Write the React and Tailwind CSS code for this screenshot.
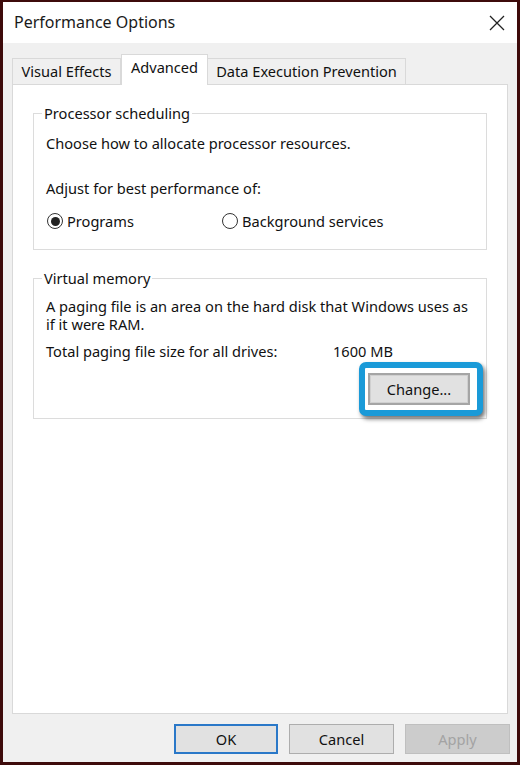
import React from "react";

const font = { fontFamily: '"Noto Sans", "Open Sans", sans-serif' };

function Radio({ checked, label }) {
  return (
    <label className="flex items-center gap-[4px]">
      <span className="w-[16px] h-[16px] rounded-full border border-[#333333] bg-white flex items-center justify-center">
        {checked && <span className="w-[9px] h-[9px] rounded-full bg-[#222222]" />}
      </span>
      <span>{label}</span>
    </label>
  );
}

function GroupBox({ title, className, children }) {
  return (
    <div className={"relative border border-[#dcdcdc] " + className}>
      <span className="absolute left-[8px] top-[-12px] bg-white px-[2px] leading-[22px]">{title}</span>
      {children}
    </div>
  );
}

export default function App() {
  return (
    <div
      className="w-[520px] h-[765px] border-[#3e0b0b] border-l-[3px] border-r-[3px] border-t-[2px] border-b-[3px] text-[14.6px] text-[#111111]"
      style={font}
    >
      <div className="flex flex-col h-full bg-[#f0f0f0]">
        <div className="h-[41px] bg-white flex items-center justify-between pl-[11px] pr-[12px]">
          <span className="text-[16px] text-[#1a1a1a] leading-none pb-[2px]">Performance Options</span>
          <svg width="16" height="16" viewBox="0 0 16 16">
            <path d="M1 1 L15 15 M15 1 L1 15" stroke="#222" strokeWidth="1.3" />
          </svg>
        </div>
        <div className="flex-1 flex flex-col px-[9px] pt-[10px]">
          <div className="flex items-end h-[31px] relative z-10">
            <div className="h-[26px] w-[109px] border border-[#d9d9d9] border-b-0 bg-[#f0f0f0] flex items-center justify-center">Visual Effects</div>
            <div className="h-[31px] w-[87px] border border-[#d9d9d9] border-b-0 bg-white flex items-center justify-center pb-[4px] mb-[-1px]">Advanced</div>
            <div className="h-[26px] w-[198px] border border-[#d9d9d9] border-b-0 border-l-0 bg-[#f0f0f0] flex items-center justify-center">Data Execution Prevention</div>
          </div>
          <div className="h-[630px] w-[496px] bg-white border border-[#d9d9d9] px-[20px] pt-[28px]">
            <GroupBox title="Processor scheduling" className="h-[137px] pl-[12px] pt-[18px]">
              <div className="leading-[22px]">Choose how to allocate processor resources.</div>
              <div className="leading-[22px] mt-[23px]">Adjust for best performance of:</div>
              <div className="flex mt-[11px] leading-[22px] pl-[1px]">
                <div className="w-[175px]"><Radio checked label="Programs" /></div>
                <Radio label="Background services" />
              </div>
            </GroupBox>
            <GroupBox title="Virtual memory" className="h-[141px] mt-[28px] pl-[12px] pt-[18px]">
              <div className="leading-[18px] pr-[10px]">A paging file is an area on the hard disk that Windows uses as if it were RAM.</div>
              <div className="flex leading-[22px] mt-[7px]">
                <span className="w-[287px]">Total paging file size for all drives:</span>
                <span>1600 MB</span>
              </div>
              <div className="flex justify-end pr-[3px] mt-[0px]">
                <div className="rounded-[7px] border-[6px] border-[#1a9ad8] px-[3px] py-[5px] pr-[7px] shadow-[2px_3px_4px_rgba(0,0,0,0.55)] bg-white">
                  <button className="w-[102px] h-[32px] bg-[#e1e1e1] border-2 border-[#a5a5a5] shadow-[inset_0_0_0_1px_#d0d0d0] leading-none">Change...</button>
                </div>
              </div>
            </GroupBox>
          </div>
          <div className="flex justify-end gap-[11px] mt-[10px] pr-[2px] mr-[-4px]">
            <button className="w-[104px] h-[30px] bg-[#e1e1e1] border-2 border-[#2a78c8] leading-none">OK</button>
            <button className="w-[105px] h-[30px] bg-[#e1e1e1] border border-[#adadad] leading-none">Cancel</button>
            <button className="w-[105px] h-[30px] bg-[#cccccc] border border-[#bfbfbf] text-[#a3a3a3] leading-none">Apply</button>
          </div>
        </div>
      </div>
    </div>
  );
}
